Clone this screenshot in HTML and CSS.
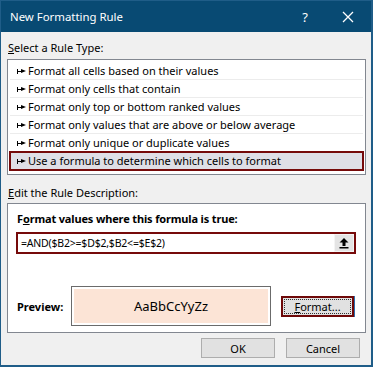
FILE: index.html
```html
<!DOCTYPE html>
<html lang="en">
<head>
    <meta charset="UTF-8">
    <title>New Formatting Rule</title>
    <link rel="stylesheet" href="styles.css">
</head>
<body>
    <div class="window">
        <div class="title-bar">
            <span class="title">New Formatting Rule</span>
            <span class="help">?</span>
            <svg class="close" width="12" height="12" viewBox="0 0 12 12" aria-hidden="true">
                <path d="M1 1 L11 11 M11 1 L1 11" stroke="#fff" stroke-width="1.3"/>
            </svg>
        </div>

        <div class="content">
            <div class="label"><u>S</u>elect a Rule Type:</div>
            <div class="rule-list">
                <div class="rule"><span class="bullet"></span>Format all cells based on their values</div>
                <div class="rule"><span class="bullet"></span>Format only cells that contain</div>
                <div class="rule"><span class="bullet"></span>Format only top or bottom ranked values</div>
                <div class="rule"><span class="bullet"></span>Format only values that are above or below average</div>
                <div class="rule"><span class="bullet"></span>Format only unique or duplicate values</div>
                <div class="rule selected"><span class="bullet"></span>Use a formula to determine which cells to format</div>
            </div>

            <div class="label label-edit"><u>E</u>dit the Rule Description:</div>
            <div class="desc-box">
                <div class="desc-title">F<u>o</u>rmat values where this formula is true:</div>
                <div class="formula">
                    <span class="formula-text">=AND($B2&gt;=$D$2,$B2&lt;=$E$2)</span>
                    <span class="collapse-btn">
                        <svg width="10" height="12" viewBox="0 0 10 12" aria-hidden="true">
                            <path d="M5 1 L9.5 5.5 L6.5 5.5 L6.5 9 L3.5 9 L3.5 5.5 L0.5 5.5 Z" fill="#000"/>
                            <rect x="0.5" y="10" width="9" height="1.5" fill="#000"/>
                        </svg>
                    </span>
                </div>
                <div class="preview-row">
                    <span class="preview-label">Preview:</span>
                    <div class="preview-box">
                        <div class="preview-fill">AaBbCcYyZz</div>
                    </div>
                    <button class="btn btn-format"><span class="focus"><u>F</u>ormat...</span></button>
                </div>
            </div>

            <div class="actions">
                <button class="btn">OK</button>
                <button class="btn">Cancel</button>
            </div>
        </div>
    </div>
</body>
</html>
```

FILE: styles.css
```css
* {
    box-sizing: border-box;
}

body {
    margin: 0;
    background: #ffffff;
    font-family: "Noto Sans", "Open Sans", sans-serif;
    font-size: 11px;
    color: #000;
}

.window {
    width: 373px;
    height: 367px;
    background: #f0f0f0;
    border: 1px solid #1f5d88;
    border-right-width: 2px;
    border-bottom-width: 2px;
}

.title-bar {
    height: 31px;
    background: #084a73;
    color: #fff;
    display: flex;
    align-items: center;
    padding-left: 9px;
    font-size: 11.4px;
}

.title {
    flex: 1;
}

.help {
    font-size: 13px;
    margin-right: 34px;
}

.close {
    margin-right: 17px;
}

.content {
    padding: 8px 5px 0 6px;
}

.label {
    height: 16px;
    line-height: 16px;
    padding-left: 1px;
}

.rule-list {
    margin-top: 3px;
    height: 116px;
    background: #fff;
    border: 1px solid #828790;
    padding: 2px 1px 0 1px;
}

.rule {
    height: 18px;
    line-height: 17px;
    margin: 0 1px;
    border-bottom: 1px solid #ececec;
    display: flex;
    align-items: center;
    padding-left: 7px;
}

.rule.selected {
    background: #dfdfe6;
    outline: 2px solid #760a0a;
    outline-offset: -1px;
    border-bottom-color: transparent;
}

.bullet {
    position: relative;
    width: 9px;
    height: 5px;
    margin-right: 2px;
    margin-top: 1px;
    border-left: 1px solid #000;
}

.bullet::before {
    content: "";
    position: absolute;
    left: 0;
    top: 2px;
    width: 4px;
    height: 1px;
    background: #000;
}

.bullet::after {
    content: "";
    position: absolute;
    left: 3px;
    top: 0;
    border-left: 5px solid #000;
    border-top: 2.5px solid transparent;
    border-bottom: 2.5px solid transparent;
}

.label-edit {
    margin-top: 10px;
}

.desc-box {
    margin-top: 2px;
    height: 130px;
    background: #fff;
    border: 1px solid #828790;
    padding: 7px 0 0 8px;
}

.desc-title {
    height: 16px;
    line-height: 16px;
    font-weight: bold;
    letter-spacing: -0.15px;
    padding-left: 1px;
}

.formula {
    margin-top: 5px;
    width: 340px;
    height: 22px;
    border: 2px solid #760a0a;
    display: flex;
    align-items: center;
    justify-content: space-between;
    padding-left: 3px;
}

.formula-text {
    font-size: 10.5px;
    letter-spacing: -0.2px;
}

.collapse-btn {
    width: 20px;
    height: 18px;
    background: #e4e4e4;
    border: 1px solid #f4f4f4;
    display: flex;
    align-items: center;
    justify-content: center;
}

.preview-row {
    margin-top: 32px;
    height: 40px;
    display: flex;
    align-items: center;
}

.preview-label {
    font-weight: bold;
    width: 55px;
    padding-left: 1px;
}

.preview-box {
    width: 200px;
    height: 40px;
    border: 1px solid #6b6b6b;
    padding: 2px;
    background: #fff;
}

.preview-fill {
    height: 100%;
    background: #fce4d6;
    display: flex;
    align-items: center;
    justify-content: center;
    font-size: 13px;
}

.btn {
    font-family: inherit;
    font-size: 11px;
    width: 74px;
    height: 20px;
    background: #e1e1e1;
    border: 1px solid #adadad;
    padding: 0;
    color: #000;
}

.btn-format {
    margin-left: 10px;
    width: 73px;
    height: 21px;
    border: 2px solid #6e0808;
    box-shadow: 1px 0 0 #2a6fb0;
    padding: 1px;
}

.focus {
    display: block;
    height: 100%;
    border: 1px dotted #333;
    line-height: 13px;
}

.actions {
    margin-top: 5px;
    display: flex;
    justify-content: flex-end;
    gap: 11px;
    padding-right: 6px;
}
```
